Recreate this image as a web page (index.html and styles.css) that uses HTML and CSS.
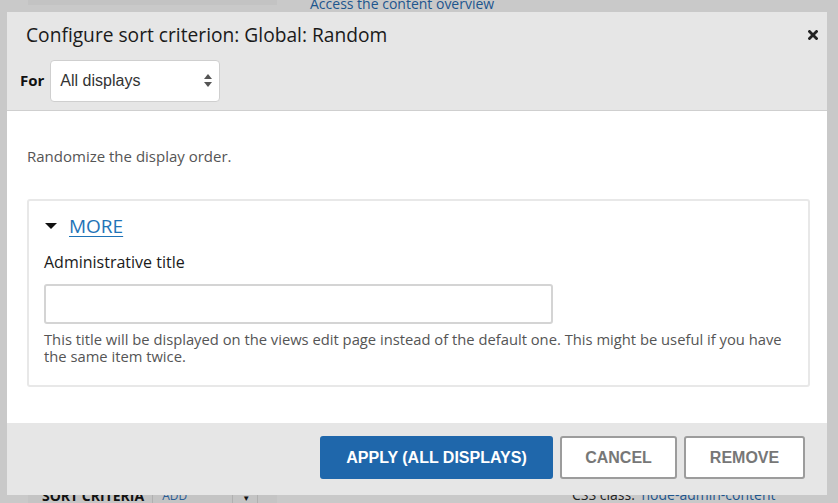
FILE: index.html
```html
<!DOCTYPE html>
<html>
<head>
    <title>Configure sort criterion</title>
    <link rel="stylesheet" href="styles.css">
</head>
<body>
    <div class="page">
        <div class="page-top">
            <div class="tab-strip"></div>
            <a class="overview-link" href="#">Access the content overview</a>
        </div>
        <div class="page-bottom">
            <div class="criteria-bar">
                <span class="criteria-title">SORT CRITERIA</span>
                <span class="criteria-add">ADD</span>
                <span class="criteria-drop">&#9660;</span>
            </div>
            <div class="css-class">CSS class: <a href="#">node-admin-content</a></div>
        </div>
    </div>

    <div class="dialog">
        <div class="dialog-header">
            <div class="title-row">
                <h1 class="dialog-title">Configure sort criterion: Global: Random</h1>
                <button class="close-btn" aria-label="Close">
                    <svg width="10" height="10" viewBox="0 0 10 10">
                        <path d="M1.5 1.5 L8.5 8.5 M8.5 1.5 L1.5 8.5" stroke="#232323" stroke-width="2.8" stroke-linecap="square"/>
                    </svg>
                </button>
            </div>
            <div class="for-row">
                <label class="for-label">For</label>
                <div class="select-box">
                    <span>All displays</span>
                    <svg class="select-arrows" width="8" height="14" viewBox="0 0 8 14">
                        <path d="M4 0 L8 5 L0 5 Z" fill="#555"/>
                        <path d="M0 8 L8 8 L4 13 Z" fill="#555"/>
                    </svg>
                </div>
            </div>
        </div>

        <div class="dialog-content">
            <p class="intro">Randomize the display order.</p>
            <div class="details">
                <div class="summary">
                    <span class="summary-arrow"></span>
                    <a class="summary-link" href="#">MORE</a>
                </div>
                <label class="field-label">Administrative title</label>
                <input class="text-input" type="text">
                <div class="field-desc">This title will be displayed on the views edit page instead of the default one. This might be useful if you have the same item twice.</div>
            </div>
        </div>

        <div class="dialog-footer">
            <button class="btn btn-primary">APPLY (ALL DISPLAYS)</button>
            <button class="btn btn-cancel">CANCEL</button>
            <button class="btn btn-remove">REMOVE</button>
        </div>
    </div>
</body>
</html>
```

FILE: styles.css
```css
body {
    margin: 0;
    background: #c9c9c9;
    font-family: "Open Sans", sans-serif;
    overflow: hidden;
}
.page {
    height: 503px;
    display: flex;
    flex-direction: column;
    justify-content: space-between;
}
.page-top {
    display: flex;
    height: 12px;
    overflow: hidden;
}
.tab-strip {
    width: 249px;
    height: 5px;
    margin-left: 28px;
    background: #c3c3c3;
}
.overview-link {
    margin-left: 33px;
    margin-top: -5px;
    font-size: 14px;
    line-height: 18px;
    color: #1d568e;
    text-decoration: none;
}
.page-bottom {
    display: flex;
    height: 12px;
    overflow: hidden;
}
.criteria-bar {
    display: flex;
    align-items: flex-start;
    width: 249px;
    margin-left: 28px;
    background: #c4c4c4;
}
.criteria-title {
    padding-left: 14px;
    padding-right: 8px;
    border-right: 1px solid #b0b0b0;
    font-size: 14px;
    font-weight: bold;
    line-height: 20px;
    margin-top: -5px;
    color: #111;
}
.criteria-add {
    padding-left: 9px;
    width: 70px;
    border-right: 1px solid #b0b0b0;
    font-size: 12px;
    line-height: 20px;
    margin-top: -5px;
    color: #2a5d96;
}
.criteria-drop {
    padding-left: 9px;
    width: 15px;
    border-right: 1px solid #b0b0b0;
    font-size: 8px;
    line-height: 14px;
    color: #111;
}
.css-class {
    margin-left: 295px;
    margin-top: -6px;
    font-size: 14px;
    line-height: 20px;
    color: #222;
}
.css-class a {
    color: #1d568e;
    text-decoration: none;
    margin-left: 3px;
}

.dialog {
    position: absolute;
    left: 7px;
    top: 12px;
    width: 820px;
    height: 483px;
    display: flex;
    flex-direction: column;
    background: #fff;
}
.dialog-header {
    background: #e6e6e6;
    border-bottom: 1px solid #cfcfcf;
    padding: 11px 0 8px;
}
.title-row {
    display: flex;
    align-items: center;
    justify-content: space-between;
    padding: 0 9px 0 19px;
}
.dialog-title {
    margin: 0;
    font-size: 19.2px;
    font-weight: normal;
    line-height: 24px;
    color: #1a1a1a;
}
.close-btn {
    border: none;
    background: none;
    padding: 0;
    width: 10px;
    height: 10px;
    display: flex;
    cursor: pointer;
}
.for-row {
    display: flex;
    align-items: center;
    margin-top: 13px;
    padding-left: 13px;
}
.for-label {
    font-size: 15px;
    font-weight: bold;
    color: #111;
    margin-right: 6px;
    padding-bottom: 3px;
}
.select-box {
    width: 170px;
    height: 42px;
    box-sizing: border-box;
    display: flex;
    align-items: center;
    justify-content: space-between;
    padding: 0 7px 0 9px;
    background: #fff;
    border: 1px solid #cfcfcf;
    border-radius: 4px;
    font-family: "Liberation Sans", Arial, sans-serif;
    font-size: 16px;
    color: #333;
}

.dialog-content {
    flex: 1;
    padding: 35px 17px 0 20px;
}
.intro {
    margin: 0 0 33px;
    font-size: 15px;
    line-height: 20px;
    color: #555;
}
.details {
    border: 2px solid #e8e8e8;
    border-radius: 3px;
    padding: 12px 15px 20px;
}
.summary {
    display: flex;
    align-items: center;
    line-height: 26px;
}
.summary-arrow {
    width: 0;
    height: 0;
    margin-left: 1px;
    margin-right: 12px;
    border-left: 6px solid transparent;
    border-right: 6px solid transparent;
    border-top: 6px solid #111;
}
.summary-link {
    font-size: 19px;
    color: #1f73b7;
    text-decoration: underline;
    text-underline-offset: 3px;
}
.field-label {
    display: block;
    margin-top: 12px;
    font-size: 16px;
    line-height: 22px;
    color: #1a1a1a;
}
.text-input {
    display: block;
    margin-top: 11px;
    width: 509px;
    height: 40px;
    box-sizing: border-box;
    border: 2px solid #d4d4d4;
    border-radius: 3px;
}
.field-desc {
    margin-top: 7px;
    font-size: 14.75px;
    line-height: 17px;
    color: #555;
}

.dialog-footer {
    height: 72px;
    box-sizing: border-box;
    background: #e6e6e6;
    display: flex;
    justify-content: flex-end;
    align-items: flex-start;
    gap: 7px;
    padding: 13px 22px 0 0;
}
.btn {
    height: 43px;
    padding: 0;
    border: 2px solid #9c9c9c;
    border-radius: 3px;
    background: #fff;
    color: #777;
    font-family: "Liberation Sans", Arial, sans-serif;
    font-size: 16px;
    font-weight: bold;
    cursor: pointer;
}
.btn-primary {
    width: 233px;
    background: #1f67ab;
    border-color: #1f67ab;
    color: #fff;
}
.btn-cancel {
    width: 117px;
}
.btn-remove {
    width: 121px;
}
```
